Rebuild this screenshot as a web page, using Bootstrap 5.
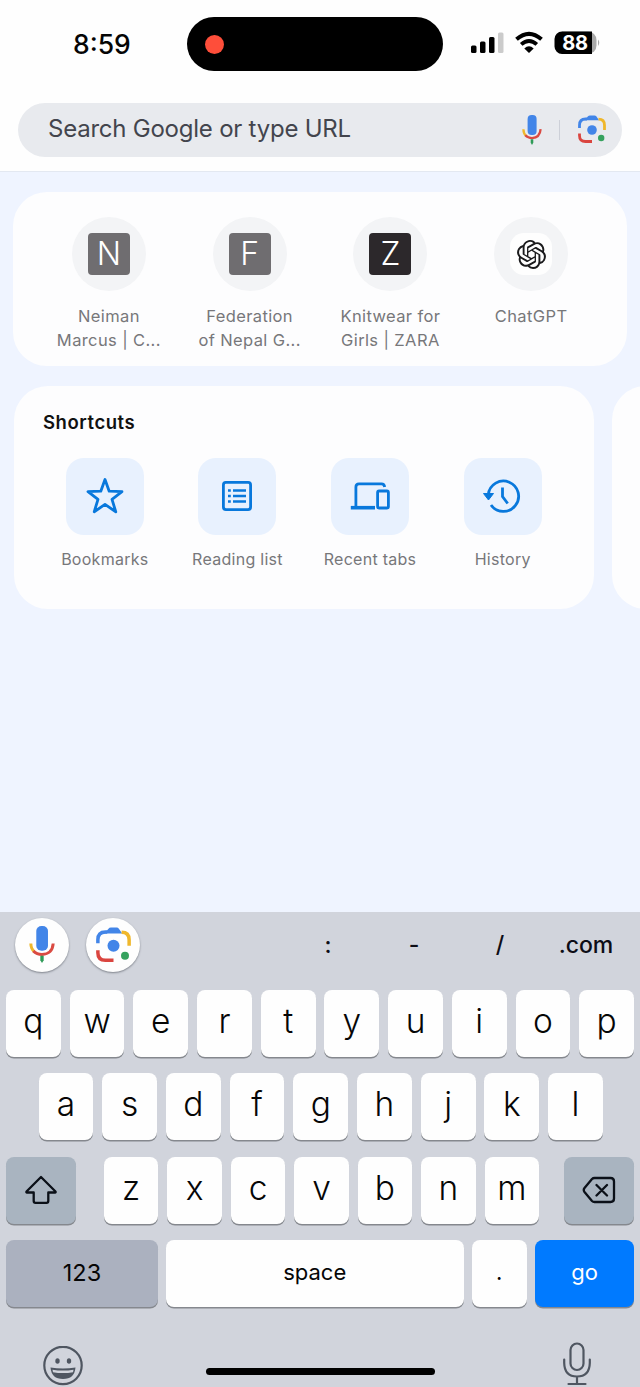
<!DOCTYPE html>
<html lang="en">
<head>
<meta charset="utf-8">
<meta name="viewport" content="width=device-width, initial-scale=1">
<title>New tab</title>
<link href="https://cdn.jsdelivr.net/npm/bootstrap@5.3.0/dist/css/bootstrap.min.css" rel="stylesheet">
<style>
body{font-family:Inter,"Liberation Sans",sans-serif;background:#eff4ff;width:640px;height:1387px;overflow:hidden}
svg{display:block;flex:none}
.top-area{height:172px;background:#fefefe;border-bottom:1px solid #e3e8f1}
.status{height:88px;padding-left:73px}
.clock{width:114px;font-size:26.500px;font-weight:500;letter-spacing:0;line-height:54px;color:#050505;margin-top:17px}
.island{width:256px;height:54px;margin-top:17px;padding-left:17.500px;background:#000}
.rec{width:19px;height:19px;background:#fe4e3a}
.indicators{margin:31px 0 0 28px;height:23px}
.battery-text{font-family:Inter,sans-serif;font-weight:700;font-size:20px;letter-spacing:-.3px}
.search{margin:15px 18px 0;height:54px;background:#e8eaee;padding:0 16px 0 30px}
.search-text{font-size:24px;letter-spacing:-.23px;color:#43454d;line-height:52px;padding-bottom:2px}
.divider{width:1px;height:20px;background:#cdd0d8;margin:0 18px 0 17px}
.search-lens{margin-bottom:2px}
.panel{background:#fdfdfe;border-radius:34px}
.sites{margin:20px 13px 0;height:174px;padding:25px 25.500px 0 25.500px}
.site-icon{width:74px;height:74px;background:#f3f4f6}
.letter{width:42px;height:42px;border-radius:4px;font-size:32px;font-weight:300;line-height:42px;color:#fff;background:#6f6d70}
.letter.dark{background:#2c282b}
.letter.blank{background:#fefefe;border-radius:14px}
.site-name{font-size:16.500px;line-height:24px;letter-spacing:.38px;color:#77777a;margin-top:13px}
.shelf{margin:20px 0 0 14px;gap:18px;overflow:hidden}
.shortcuts{width:580px;height:223px;padding:24px 25px 0 24.500px;flex:none}
.next{width:120px;height:223px;flex:none}
.shelf-title{font-size:18.500px;font-weight:600;line-height:24px;letter-spacing:.55px;color:#111;margin:0 0 24px 4.500px}
.tile{width:78px;height:77px;border-radius:18px;background:#e8f1fe;padding-bottom:2px}
.tile-name{font-size:16px;line-height:22px;letter-spacing:.27px;color:#77777a;margin-top:13px}
.keyboard{position:static;height:475px;background:#d1d4dc;padding:6px 6px 0}
.spacer-area{height:303px}
.tools{height:54px;padding:0 5px 0 9px;gap:17px}
.round-btn{width:54px;height:54px;background:#fefefe;box-shadow:0 1px 2px rgba(60,65,75,.55);padding-bottom:2px}
.quick{font-size:23px;font-weight:500;line-height:54px;width:86px;color:#0d0d16}
.keys{height:67px;gap:8.900px;margin-top:16.300px}
.tools + .keys{margin-top:18px}
.key{flex:1 1 0;background:#fefefe;border-radius:8px;box-shadow:0 1.500px 0 #85888e;font-size:33.500px;font-weight:300;line-height:62px;text-align:center;color:#060606}
.key-word{font-size:22px;font-weight:400;line-height:64px}
.key-mod{background:#a9b4c0}
.key-num{background:#abb1bf;font-size:23.500px;line-height:66px;flex:0 0 152px}
.key-dot{flex:0 0 55.500px}
.key-go{background:#007aff;color:#fff;flex:0 0 99px}
.second{padding:0 31px 0 32.500px}
.third .wide{flex:0 0 70px}
.third .wide:first-child{margin-right:19px}
.third .wide:last-child{margin-left:16px}
.fourth{gap:8px}
.bottom-bar{height:80px;padding:35px 43px 0 37px}
.home{width:229px;height:7px;background:#000;margin:26px 6px 0 0}
</style>
</head>
<body>
<header class="top-area">
  <div class="status d-flex">
    <div class="clock">8:59</div>
    <div class="island rounded-pill d-flex align-items-center"><span class="rec rounded-circle"></span></div>
    <div class="indicators d-flex">
      <svg width="130" height="24" viewBox="0 0 130 24">
        <rect x="0" y="14.500" width="5.500" height="7.500" rx="1.500"/><rect x="9" y="10.500" width="5.500" height="11.500" rx="1.500"/><rect x="18" y="6" width="5.500" height="16" rx="1.500"/><rect x="27" y="1.500" width="5.500" height="20.500" rx="1.500" fill="#cbcbcb"/>
        <g transform="translate(44 1)"><path d="M1.500 7.300Q14-3.700 26.500 7.300" stroke="#000" stroke-width="4" fill="none"/><path d="M6.200 12.400Q14 5.400 21.800 12.400" stroke="#000" stroke-width="3.800" fill="none"/><path d="M9.300 16.400Q14 12.200 18.700 16.400L14 21Z"/></g>
        <path d="M91 .5H117a8.500 8.500 0 0 1 8.500 8.500v5.500a8.500 8.500 0 0 1-8.500 8.500H91Z" fill="#a9a9a9"/>
        <path d="M121 .5H91a7.500 7.500 0 0 0-7.500 7.500v7.500A7.500 7.500 0 0 0 91 23H121Z"/>
        <path d="M127 8.500q2.500 3.200 0 6.500Z" fill="#a9a9a9"/>
        <text class="battery-text" x="104" y="19" text-anchor="middle" fill="#fff">88</text>
      </svg>
    </div>
  </div>
  <div class="search rounded-pill d-flex align-items-center">
    <span class="search-text flex-grow-1">Search Google or type URL</span>
    <svg width="20" height="30" viewBox="0 0 20 30"><use href="#g-mic"/></svg>
    <span class="divider"></span>
    <svg class="search-lens" width="28" height="28" viewBox="0 0 28 28"><use href="#g-lens"/></svg>
  </div>
</header>

<svg width="0" height="0" class="position-absolute">
  <defs>
    <g id="g-mic">
      <rect x="5.600" y="0" width="9" height="20" rx="4" fill="#4285e8"/>
      <path d="M1.400 14.200Q1.500 18.500 4.100 20.900" fill="none" stroke="#efb72b" stroke-width="2.300"/>
      <path d="M3.300 20.300Q6 23.100 10 23.100Q18 22.800 18.600 14.200" fill="none" stroke="#da4a42" stroke-width="2.300"/>
      <path d="M8.700 24.200h2.600v3.600L10 30l-1.300-2.200Z" fill="#2f9b58"/>
    </g>
    <g id="g-lens">
      <path d="M1.500 13V10.200Q1.500 4 7.500 4H9" fill="none" stroke="#4285e8" stroke-width="2.800"/>
      <path d="M6.500 5.200 10 1.300Q10.600.4 12 .4H16.500Q17.700.4 18.300 1.300L21 5.200Z" fill="#4285e8"/>
      <path d="M20.500 4.200Q26.500 4.200 26.500 10.200V15" fill="none" stroke="#efb72b" stroke-width="2.800"/>
      <path d="M1.500 18.500V20.500Q1.500 26.500 7.500 26.500H14" fill="none" stroke="#da453f" stroke-width="2.800"/>
      <circle cx="14" cy="15" r="4.800" fill="#4285e8"/><circle cx="23.200" cy="23" r="3.200" fill="#36a25e"/>
    </g>
  </defs>
</svg>

<main>
  <section class="panel sites">
    <div class="row g-0 text-center">
      <div class="col d-flex flex-column align-items-center"><div class="site-icon rounded-circle d-flex align-items-center justify-content-center"><span class="letter">N</span></div><div class="site-name">Neiman<br>Marcus | C...</div></div>
      <div class="col d-flex flex-column align-items-center"><div class="site-icon rounded-circle d-flex align-items-center justify-content-center"><span class="letter">F</span></div><div class="site-name">Federation<br>of Nepal G...</div></div>
      <div class="col d-flex flex-column align-items-center"><div class="site-icon rounded-circle d-flex align-items-center justify-content-center"><span class="letter dark">Z</span></div><div class="site-name">Knitwear for<br>Girls | ZARA</div></div>
      <div class="col d-flex flex-column align-items-center"><div class="site-icon rounded-circle d-flex align-items-center justify-content-center"><span class="letter blank d-flex align-items-center justify-content-center">
        <svg width="29" height="29" viewBox="0 0 24 24" fill="#1b1b1d"><path d="M22.2819 9.8211a5.9847 5.9847 0 0 0-.5157-4.9108 6.0462 6.0462 0 0 0-6.5098-2.9A6.0651 6.0651 0 0 0 4.9807 4.1818a5.9847 5.9847 0 0 0-3.9977 2.9 6.0462 6.0462 0 0 0 .7427 7.0966 5.98 5.98 0 0 0 .511 4.9107 6.051 6.051 0 0 0 6.5146 2.9001A5.9847 5.9847 0 0 0 13.2599 24a6.0557 6.0557 0 0 0 5.7718-4.2058 5.9894 5.9894 0 0 0 3.9977-2.9001 6.0557 6.0557 0 0 0-.7475-7.0729zm-9.022 12.6081a4.4755 4.4755 0 0 1-2.8764-1.0408l.1419-.0804 4.7783-2.7582a.7948.7948 0 0 0 .3927-.6813v-6.7369l2.02 1.1686a.071.071 0 0 1 .038.052v5.5826a4.504 4.504 0 0 1-4.4945 4.4944zm-9.6607-4.1254a4.4708 4.4708 0 0 1-.5346-3.0137l.142.0852 4.783 2.7582a.7712.7712 0 0 0 .7806 0l5.8428-3.3685v2.3324a.0804.0804 0 0 1-.0332.0615L9.74 19.9502a4.4992 4.4992 0 0 1-6.1408-1.6464zM2.3408 7.8956a4.485 4.485 0 0 1 2.3655-1.9728V11.6a.7664.7664 0 0 0 .3879.6765l5.8144 3.3543-2.0201 1.1685a.0757.0757 0 0 1-.071 0l-4.8303-2.7865A4.504 4.504 0 0 1 2.3408 7.872zm16.5963 3.8558L13.1038 8.364 15.1192 7.2a.0757.0757 0 0 1 .071 0l4.8303 2.7913a4.4944 4.4944 0 0 1-.6765 8.1042v-5.6772a.79.79 0 0 0-.407-.667zm2.0107-3.0231l-.142-.0852-4.7735-2.7818a.7759.7759 0 0 0-.7854 0L9.409 9.2297V6.8974a.0662.0662 0 0 1 .0284-.0615l4.8303-2.7866a4.4992 4.4992 0 0 1 6.6802 4.66zM8.3065 12.863l-2.02-1.1638a.0804.0804 0 0 1-.038-.0567V6.0742a4.4992 4.4992 0 0 1 7.3757-3.4537l-.142.0805L8.704 5.459a.7948.7948 0 0 0-.3927.6813zm1.0976-2.3654l2.602-1.4998 2.6069 1.4998v2.9994l-2.5974 1.4997-2.6067-1.4997Z"/></svg></span></div><div class="site-name">ChatGPT</div></div>
    </div>
  </section>

  <div class="shelf d-flex">
    <section class="panel shortcuts">
      <h2 class="shelf-title">Shortcuts</h2>
      <div class="row g-0 text-center">
        <div class="col d-flex flex-column align-items-center"><div class="tile d-flex align-items-center justify-content-center">
          <svg width="40" height="40" viewBox="0 0 40 40" fill="none" stroke="#0878dc" stroke-width="2.800" stroke-linejoin="round"><path d="M20 3.500 24.200 15.200 37 15.700 27 23.300 30.800 35.800 20 28.400 9.200 35.800 13 23.300 3 15.700 15.800 15.200Z"/></svg></div><div class="tile-name">Bookmarks</div></div>
        <div class="col d-flex flex-column align-items-center"><div class="tile d-flex align-items-center justify-content-center">
          <svg width="40" height="40" viewBox="0 0 40 40" fill="none" stroke="#0878dc" stroke-width="2.800"><rect x="6.400" y="6.400" width="27.200" height="27.200" rx="2.500"/><path d="M11 14.500h2.800M16 14.500h13M11 20h2.800M16 20h13M11 25.500h2.800M16 25.500h13" stroke-width="2.300"/></svg></div><div class="tile-name">Reading list</div></div>
        <div class="col d-flex flex-column align-items-center"><div class="tile d-flex align-items-center justify-content-center">
          <svg width="40" height="40" viewBox="0 0 40 40" fill="none" stroke="#0878dc" stroke-width="2.800"><path d="M5.900 30V11Q5.900 7.900 9 7.900H31.500Q34.300 7.900 34.700 11"/><path d="M.8 31.700H25" stroke-width="3.600"/><rect x="27.600" y="15" width="10.800" height="17" rx="1.500"/></svg></div><div class="tile-name">Recent tabs</div></div>
        <div class="col d-flex flex-column align-items-center"><div class="tile d-flex align-items-center justify-content-center">
          <svg width="40" height="40" viewBox="0 0 40 40" fill="none" stroke="#0878dc" stroke-width="2.800"><path d="M5.300 18.500A15.200 15.200 0 1 1 8 29"/><path d="M.5 17.500H10.500L5.500 24Z" fill="#0878dc" stroke-width="1"/><path d="M19.500 11.500V20.500L24.700 27.500"/></svg></div><div class="tile-name">History</div></div>
      </div>
    </section>
    <section class="panel next"></section>
  </div>
  <div class="spacer-area"></div>
</main>

<footer class="keyboard">
  <div class="tools d-flex">
    <div class="round-btn rounded-circle d-flex align-items-center justify-content-center"><svg width="26" height="37" viewBox="0 0 20 30" preserveAspectRatio="none"><use href="#g-mic"/></svg></div>
    <div class="round-btn rounded-circle d-flex align-items-center justify-content-center"><svg width="35" height="35" viewBox="0 0 28 28"><use href="#g-lens"/></svg></div>
    <div class="d-flex ms-auto text-center"><span class="quick">:</span><span class="quick">-</span><span class="quick">/</span><span class="quick">.com</span></div>
  </div>
  <div class="keys d-flex"><div class="key">q</div><div class="key">w</div><div class="key">e</div><div class="key">r</div><div class="key">t</div><div class="key">y</div><div class="key">u</div><div class="key">i</div><div class="key">o</div><div class="key">p</div></div>
  <div class="keys d-flex second"><div class="key">a</div><div class="key">s</div><div class="key">d</div><div class="key">f</div><div class="key">g</div><div class="key">h</div><div class="key">j</div><div class="key">k</div><div class="key">l</div></div>
  <div class="keys d-flex third">
    <div class="key key-mod wide d-flex align-items-center justify-content-center"><svg width="34" height="30" viewBox="0 0 34 30" fill="none" stroke="#0b1018" stroke-width="2.300" stroke-linejoin="round"><path d="M17 2 31.500 16.500Q32 17.500 31 17.500H24.300V26Q24.300 27.800 22.500 27.800H11.500Q9.700 27.800 9.700 26V17.500H3Q2 17.500 2.500 16.500Z"/></svg></div>
    <div class="key">z</div><div class="key">x</div><div class="key">c</div><div class="key">v</div><div class="key">b</div><div class="key">n</div><div class="key">m</div>
    <div class="key key-mod wide d-flex align-items-center justify-content-center"><svg width="34" height="30" viewBox="0 0 34 30" fill="none" stroke="#0b1018" stroke-width="2.300" stroke-linejoin="round" stroke-linecap="round"><path d="M12.500 3H28.500Q32 3 32 6.500V23.500Q32 27 28.500 27H12.500Q11 27 10 26L2.500 17Q1 15 2.500 13L10 4Q11 3 12.500 3ZM14.500 10 25 20.500M25 10 14.500 20.500"/></svg></div>
  </div>
  <div class="keys d-flex fourth"><div class="key key-word key-num">123</div><div class="key key-word">space</div><div class="key key-word key-dot">.</div><div class="key key-word key-go">go</div></div>
  <div class="bottom-bar d-flex justify-content-between">
    <svg width="40" height="42" viewBox="0 0 40 42" class="mt-1"><g transform="translate(0 -1)" fill="#4f5661"><circle cx="20" cy="20.500" r="18.700" fill="none" stroke="#4f5661" stroke-width="2.200"/><ellipse cx="14.500" cy="16" rx="2.200" ry="2.700"/><ellipse cx="26" cy="16" rx="2.200" ry="2.700"/><path d="M7.500 22.500Q20 24.500 32.500 22.500 31.500 34 20 34 8.500 34 7.500 22.500Z"/><path d="M9.500 24.700Q20 26.400 30.500 24.700L30 27.200Q20 29 10 27.200Z" fill="#d1d4dc"/></g></svg>
    <div class="home rounded-pill"></div>
    <svg width="28" height="44" viewBox="0 0 28 44" fill="none" stroke="#4f5661" stroke-width="2.200" stroke-linecap="round"><rect x="7.500" y="1.500" width="13" height="26.500" rx="6.500"/><path d="M1.200 17.500V21Q1.500 34.500 14 34.500 26.500 34.500 26.800 21V17.500M14 34.500V42M5.500 42H22.500"/></svg>
  </div>
</footer>
<script src="https://cdn.jsdelivr.net/npm/bootstrap@5.3.0/dist/js/bootstrap.bundle.min.js"></script>
</body>
</html>
